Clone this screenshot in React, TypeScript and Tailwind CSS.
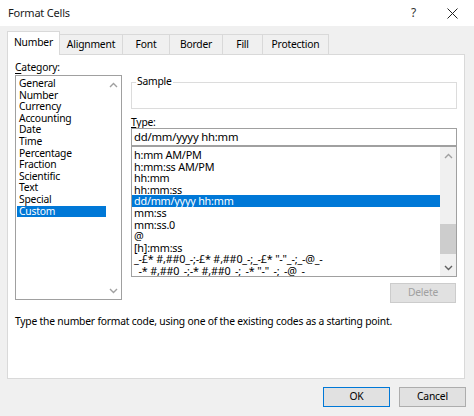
import React from "react";

const categories = [
  "General",
  "Number",
  "Currency",
  "Accounting",
  "Date",
  "Time",
  "Percentage",
  "Fraction",
  "Scientific",
  "Text",
  "Special",
  "Custom",
];

const formats = [
  "h:mm AM/PM",
  "h:mm:ss AM/PM",
  "hh:mm",
  "hh:mm:ss",
  "dd/mm/yyyy hh:mm",
  "mm:ss",
  "mm:ss.0",
  "@",
  "[h]:mm:ss",
  '_-£* #,##0_-;-£* #,##0_-;_-£* "-"_-;_-@_-',
  '_-* #,##0_-;-* #,##0_-;_-* "-"_-;_-@_-',
];

const tabs = ["Alignment", "Font", "Border", "Fill", "Protection"];
const tabWidths = ["w-[63px]", "w-[47px]", "w-[53px]", "w-[40px]", "w-[66px]"];

function UpArrow() {
  return (
    <svg width="9" height="6" viewBox="0 0 9 6">
      <path d="M1 5 L4.5 1.5 L8 5" fill="none" stroke="#a0a0a0" strokeWidth="1.4" />
    </svg>
  );
}
function DownArrow({ color = "#a0a0a0" }: { color?: string }) {
  return (
    <svg width="9" height="6" viewBox="0 0 9 6">
      <path d="M1 1 L4.5 4.5 L8 1" fill="none" stroke={color} strokeWidth="1.4" />
    </svg>
  );
}

export default function App() {
  return (
    <div className="w-[474px] h-[416px] bg-[#f0f0f0] flex flex-col text-black font-['Noto_Sans','Open_Sans',sans-serif] text-[10.3px] tracking-[-0.2px] overflow-hidden">
      {/* title bar */}
      <div className="h-[26px] bg-white flex items-center pl-[8px] pr-[16px] shrink-0">
        <span className="text-[11px] text-[#1a1a1a]">Format Cells</span>
        <span className="ml-auto text-[12px] text-[#333]">?</span>
        <span className="ml-[31px]">
          <svg width="11" height="11" viewBox="0 0 11 11">
            <path d="M0.5 0.5 L10.5 10.5 M10.5 0.5 L0.5 10.5" stroke="#222" strokeWidth="1" />
          </svg>
        </span>
      </div>

      <div className="pl-[7px] pr-[9px] pt-[6px]">
        {/* tabs */}
        <div className="flex items-end h-[23px] relative z-10">
          <div className="w-[53px] h-[24px] bg-white border border-b-0 border-[#d9d9d9] flex items-center justify-center pb-[1px]">
            Number
          </div>
          {tabs.map((t, i) => (
            <div
              key={t}
              className={`${tabWidths[i]} h-[21px] border border-l-0 border-b-0 border-[#d9d9d9] flex items-center justify-center`}
            >
              {t}
            </div>
          ))}
        </div>

        {/* panel */}
        <div className="h-[325px] bg-white border border-[#d9d9d9] -mt-px px-[7px] pt-[5px] flex flex-col">
          <div className="flex gap-[9px]">
            {/* left column */}
            <div className="w-[108px] flex flex-col">
              <div className="leading-[14px] h-[15px]">
                <span className="underline underline-offset-2">C</span>ategory:
              </div>
              <div className="h-[225px] border border-[#a0a0a0] flex">
                <div className="flex-1 flex flex-col pt-[2px] pl-px">
                  {categories.map((c) => (
                    <div
                      key={c}
                      className={`leading-[11.6px] h-[11.6px] pl-[2px] ${
                        c === "Custom" ? "bg-[#0078d7] text-white" : ""
                      }`}
                    >
                      {c}
                    </div>
                  ))}
                </div>
                <div className="w-[15px] flex flex-col items-center justify-between pt-[6px] pb-[5px]">
                  <UpArrow />
                  <DownArrow />
                </div>
              </div>
            </div>

            {/* right column */}
            <div className="w-[327px] flex flex-col pt-[22px]">
              <div className="relative w-[326px] h-[27px] border border-[#dcdcdc]">
                <span className="absolute left-[4px] -top-[8px] bg-white px-px leading-[13px]">Sample</span>
              </div>
              <div className="mt-[7px] leading-[12px] h-[12px]">
                <span className="underline underline-offset-1">T</span>ype:
              </div>
              <div className="h-[18px] border border-[#a0a0a0] flex items-center pl-[2px] text-[11.3px]">
                dd/mm/yyyy hh:mm
              </div>
              <div className="h-[131px] border border-[#a0a0a0] flex overflow-hidden">
                <div className="flex-1 flex flex-col pt-[2px] overflow-hidden text-[10.8px]">
                  {formats.map((f) => (
                    <div
                      key={f}
                      className={`leading-[11.6px] h-[11.6px] shrink-0 pl-[2px] whitespace-nowrap ${
                        f === "dd/mm/yyyy hh:mm" ? "bg-[#0078d7] text-white" : ""
                      }`}
                    >
                      {f}
                    </div>
                  ))}
                </div>
                <div className="w-[16px] bg-[#f0f0f0] flex flex-col items-center">
                  <div className="h-[16px] flex items-center justify-center pt-[2px]">
                    <UpArrow />
                  </div>
                  <div className="flex-1 w-full flex flex-col pt-[61px]">
                    <div className="h-[30px] w-full bg-[#cdcdcd]" />
                  </div>
                  <div className="h-[16px] flex items-center justify-center">
                    <DownArrow color="#606060" />
                  </div>
                </div>
              </div>
              <div className="flex justify-end mt-[6px] pr-px">
                <div className="w-[66px] h-[20px] bg-[#e1e1e1] border border-[#cccccc] text-[#a0a0a0] flex items-center justify-center">
                  Delete
                </div>
              </div>
            </div>
          </div>
          <div className="mt-[11px] leading-[14px]">
            Type the number format code, using one of the existing codes as a starting point.
          </div>
        </div>
      </div>

      {/* buttons */}
      <div className="flex justify-end gap-[9px] pr-[8px] mt-[8px]">
        <div className="w-[67px] h-[20px] bg-[#e1e1e1] border border-[#0078d7] flex items-center justify-center">
          OK
        </div>
        <div className="w-[67px] h-[20px] bg-[#e1e1e1] border border-[#adadad] flex items-center justify-center">
          Cancel
        </div>
      </div>
    </div>
  );
}
